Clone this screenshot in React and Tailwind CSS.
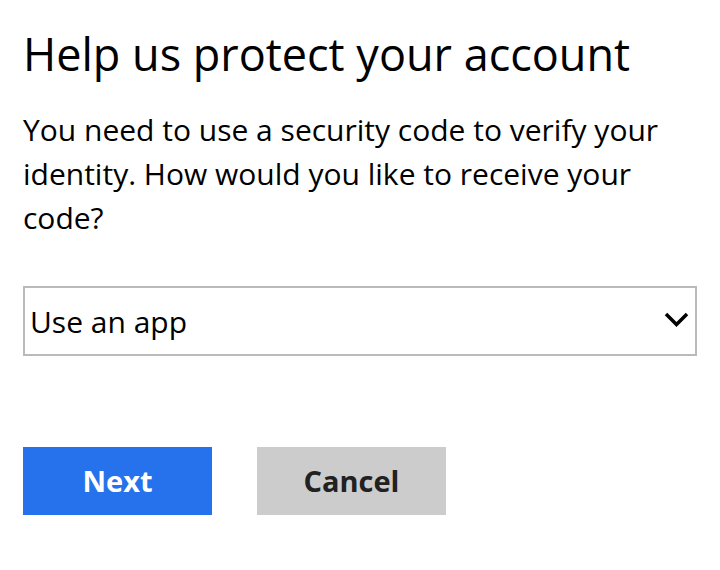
import React, { useState } from "react";

function App() {
  const [method, setMethod] = useState("app");

  return (
    <div className="min-h-[570px] w-[720px] bg-white px-[23px] pt-[26px] text-black [font-family:'Open_Sans','Noto_Sans',sans-serif]">
      {/* Title */}
      <h1 className="text-[45px] leading-[56px] font-normal">
        Help us protect your account
      </h1>

      {/* Description */}
      <p className="mt-[26px] w-[660px] text-[30px] leading-[44px]">
        You need to use a security code to verify your identity. How would you
        like to receive your code?
      </p>

      {/* Method select */}
      <div className="relative mt-[46px] h-[70px] w-[674px] border-2 border-[#bababa] bg-white">
        <select
          className="h-full w-full appearance-none bg-transparent pl-[5px] text-[30px] outline-none"
          value={method}
          onChange={(e) => setMethod(e.target.value)}
        >
          <option value="app">Use an app</option>
          <option value="sms">Text a code</option>
        </select>
        <svg
          className="pointer-events-none absolute right-[6px] top-[24px] h-[16px] w-[25px]"
          viewBox="0 0 25 16"
          fill="none"
          stroke="#000"
          strokeWidth="3.5"
        >
          <path d="M2 2 L12.5 12.5 L23 2" />
        </svg>
      </div>

      {/* Buttons */}
      <div className="mt-[91px] flex gap-[45px]">
        <button className="h-[68px] w-[189px] bg-[#2672ec] text-[29px] font-bold text-white">
          Next
        </button>
        <button className="h-[68px] w-[189px] bg-[#cccccc] text-[29px] font-bold text-[#212121]">
          Cancel
        </button>
      </div>
    </div>
  );
}

export default App;
